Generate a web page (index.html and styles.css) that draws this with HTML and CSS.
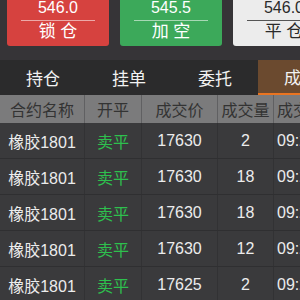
FILE: index.html
```html
<!DOCTYPE html>
<html lang="zh-CN">
<head>
    <meta charset="UTF-8">
    <meta name="viewport" content="width=device-width, initial-scale=1.0">
    <title>成交</title>
    <link rel="stylesheet" href="styles.css">
</head>
<body>
    <div class="actions">
        <div class="btn btn-red">
            <span class="price">546.0</span>
            <span class="line"></span>
            <span class="label">锁 仓</span>
        </div>
        <div class="btn btn-green">
            <span class="price">545.5</span>
            <span class="line"></span>
            <span class="label">加 空</span>
        </div>
        <div class="btn btn-white">
            <span class="price">546.0</span>
            <span class="line"></span>
            <span class="label">平 仓</span>
        </div>
    </div>

    <div class="tabs">
        <div class="tab">持仓</div>
        <div class="tab">挂单</div>
        <div class="tab">委托</div>
        <div class="tab active">成交</div>
    </div>

    <div class="grid head">
        <div>合约名称</div>
        <div>开平</div>
        <div>成交价</div>
        <div>成交量</div>
        <div class="left">成交时间</div>
    </div>
    <div class="grid row">
        <div>橡胶1801</div>
        <div class="sell">卖平</div>
        <div>17630</div>
        <div>2</div>
        <div class="left">09:20:31</div>
    </div>
    <div class="grid row">
        <div>橡胶1801</div>
        <div class="sell">卖平</div>
        <div>17630</div>
        <div>18</div>
        <div class="left">09:20:31</div>
    </div>
    <div class="grid row">
        <div>橡胶1801</div>
        <div class="sell">卖平</div>
        <div>17630</div>
        <div>18</div>
        <div class="left">09:20:31</div>
    </div>
    <div class="grid row">
        <div>橡胶1801</div>
        <div class="sell">卖平</div>
        <div>17630</div>
        <div>12</div>
        <div class="left">09:20:31</div>
    </div>
    <div class="grid row">
        <div>橡胶1801</div>
        <div class="sell">卖平</div>
        <div>17625</div>
        <div>2</div>
        <div class="left">09:20:30</div>
    </div>
</body>
</html>
```

FILE: styles.css
```css
body {
    margin: 0;
    width: 300px;
    height: 300px;
    overflow: hidden;
    background-color: #3a3a3c;
    font-family: "Liberation Sans", "Noto Sans CJK SC", sans-serif;
    font-size: 16px;
}
.actions {
    display: flex;
    gap: 11px;
    height: 60px;
    padding: 0 7px;
    background-color: #363437;
}
.btn {
    flex: 0 0 102px;
    height: 60px;
    margin-top: -14px;
    padding-top: 12px;
    box-sizing: border-box;
    border-radius: 3px;
    display: flex;
    flex-direction: column;
    align-items: center;
    color: #fff;
}
.btn .price {
    line-height: 20px;
}
.btn .line {
    width: 74px;
    height: 1px;
    margin-top: 2px;
    background-color: rgba(255, 255, 255, 0.55);
}
.btn .label {
    line-height: 22px;
    font-size: 17px;
}
.btn-red {
    background-color: #d6423f;
}
.btn-green {
    background-color: #3ca95a;
}
.btn-white {
    background-color: #ececec;
    color: #2a2a2a;
}
.btn-white .line {
    background-color: #555;
}
.tabs {
    display: flex;
    height: 35px;
    background-color: #2b2b2c;
}
.tab {
    flex: 0 0 86px;
    display: flex;
    align-items: center;
    justify-content: center;
    color: #f2f2f2;
    font-size: 17px;
    white-space: nowrap;
}
.tab.active {
    background-color: #6b4a2f;
    border-bottom: 2px solid #ea7420;
    box-sizing: border-box;
}
.grid {
    display: grid;
    grid-template-columns: 85px 57px 76px 56px 90px;
    white-space: nowrap;
}
.grid > div {
    display: flex;
    align-items: center;
    justify-content: center;
    border-right: 1px solid #333335;
}
.grid > .left {
    justify-content: flex-start;
    padding-left: 3px;
}
.head {
    height: 28px;
    background-color: #7b7b7c;
    color: #333;
}
.head > div {
    border-right-color: #606062;
}
.row {
    height: 36px;
    border-bottom: 1px solid #2f2f31;
    box-sizing: border-box;
    color: #ececec;
}
.row > div {
    border-right-color: #323234;
}
.row .sell {
    color: #2ec04e;
}
```
